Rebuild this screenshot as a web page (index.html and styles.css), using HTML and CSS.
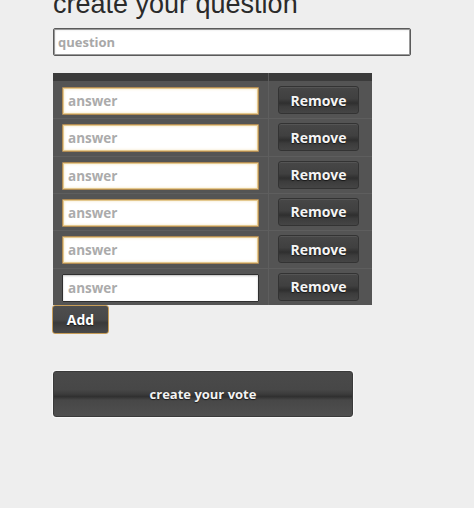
FILE: index.html
```html
<!DOCTYPE html>
<html>
<head>
<meta charset="utf-8">
<link rel="stylesheet" href="styles.css">
</head>
<body>
<main class="page">
  <h1 class="title">create your question</h1>
  <input class="question" type="text" placeholder="question">
  <div class="answers">
    <div class="answers-head"><span class="head-cell"></span><span class="head-cell last"></span></div>
    <div class="answer-row"><div class="cell-input"><input class="answer" type="text" placeholder="answer"></div><div class="cell-action"><button class="remove">Remove</button></div></div>
    <div class="answer-row"><div class="cell-input"><input class="answer" type="text" placeholder="answer"></div><div class="cell-action"><button class="remove">Remove</button></div></div>
    <div class="answer-row"><div class="cell-input"><input class="answer" type="text" placeholder="answer"></div><div class="cell-action"><button class="remove">Remove</button></div></div>
    <div class="answer-row"><div class="cell-input"><input class="answer" type="text" placeholder="answer"></div><div class="cell-action"><button class="remove">Remove</button></div></div>
    <div class="answer-row"><div class="cell-input"><input class="answer" type="text" placeholder="answer"></div><div class="cell-action"><button class="remove">Remove</button></div></div>
    <div class="answer-row"><div class="cell-input"><input class="answer plain" type="text" placeholder="answer"></div><div class="cell-action"><button class="remove">Remove</button></div></div>
  </div>
  <button class="add">Add</button>
  <button class="create">create your vote</button>
</main>
</body>
</html>
```

FILE: styles.css
```css
html, body {
  margin: 0;
  padding: 0;
  background: #eeeeee;
}

body {
  font-family: "Open Sans", "Liberation Sans", sans-serif;
  height: 508px;
  overflow: hidden;
}

.page {
  display: flex;
  flex-direction: column;
  align-items: flex-start;
  padding-left: 53px;
}

.title {
  margin: -9px 0 0 0;
  font-family: "Liberation Sans", Arial, sans-serif;
  font-weight: normal;
  font-size: 27px;
  line-height: 27px;
  color: #2a2a2a;
}

.question {
  box-sizing: border-box;
  margin: 10px 0 0 0;
  width: 358px;
  height: 28px;
  padding: 0 4px;
  border: 1px solid #5a5a5a;
  border-radius: 2px;
  box-shadow: inset 0 0 0 1px #9a9a9a, inset 1px 1px 2px rgba(0,0,0,0.15);
  background: #ffffff;
  font-family: "Open Sans", sans-serif;
  font-weight: 700;
  font-size: 13px;
  outline: none;
}

.question::placeholder {
  color: #a8a8a8;
}

.answers {
  margin-top: 17px;
  width: 319px;
  background: #545454;
  display: flex;
  flex-direction: column;
}

.answers-head {
  display: flex;
  height: 8px;
  background: #3b3b3b;
}

.head-cell {
  width: 216px;
  border-right: 1px solid #5a5a5a;
  box-sizing: border-box;
}

.head-cell.last {
  width: 103px;
  border-right: none;
}

.answer-row {
  display: flex;
  height: 37.33px;
  box-sizing: border-box;
  border-top: 1px solid #5e5e5e;
}

.answers-head + .answer-row {
  border-top: none;
}

.cell-input {
  box-sizing: border-box;
  width: 216px;
  padding: 5px 0 0 9px;
  border-right: 1px solid #5e5e5e;
}

.cell-action {
  box-sizing: border-box;
  width: 103px;
  padding: 4px 0 0 9px;
}

.answers-head + .answer-row .cell-input {
  padding-top: 6px;
}

.answers-head + .answer-row .cell-action {
  padding-top: 5px;
}

.answer {
  box-sizing: border-box;
  display: block;
  width: 197px;
  height: 28px;
  padding: 0 5px;
  margin: 0;
  border: 1px solid #b08a52;
  border-radius: 1px;
  box-shadow: inset 0 0 0 1px #e4c98f, inset 0 0 3px 1px #f3e6c6;
  background: #ffffff;
  font-family: "Open Sans", sans-serif;
  font-weight: 700;
  font-size: 13.5px;
  outline: none;
}

.answer.plain {
  border-color: #2f2f2f;
  box-shadow: inset 0 1px 2px rgba(0,0,0,0.25);
}

.answer::placeholder {
  color: #ababab;
}

.remove {
  box-sizing: border-box;
  width: 81px;
  height: 28px;
  margin: 0;
  padding: 0;
  border: 1px solid #333333;
  border-radius: 3px;
  background: linear-gradient(#474747 0%, #404040 45%, #2f2f2f 62%, #3c3c3c 75%, #454545 100%);
  box-shadow: inset 0 1px 0 rgba(255,255,255,0.08);
  color: #f4f4f4;
  font-family: "Open Sans", sans-serif;
  font-weight: 700;
  font-size: 14px;
  text-shadow: 0 1px 1px rgba(0,0,0,0.6);
  cursor: pointer;
}

.add {
  box-sizing: border-box;
  width: 57px;
  height: 29px;
  margin: 0 0 0 -1px;
  padding: 0;
  border: 1px solid #c79d58;
  border-radius: 3px;
  background: linear-gradient(#4e4e4e 0%, #484848 50%, #3a3a3a 62%, #494949 100%);
  color: #ffffff;
  font-family: "Open Sans", sans-serif;
  font-weight: 700;
  font-size: 14px;
  text-shadow: 0 1px 1px rgba(0,0,0,0.6);
}

.create {
  box-sizing: border-box;
  width: 300px;
  height: 46px;
  margin: 37px 0 0 0;
  padding: 0;
  border: 1px solid #3a3a3a;
  border-radius: 3px;
  background: linear-gradient(#4a4a4a 0%, #474747 40%, #3c3c3c 50%, #303030 56%, #474747 64%, #4f4f4f 100%);
  box-shadow: 0 0 0 1px rgba(255,255,255,0.6);
  color: #f2f2f2;
  font-family: "Open Sans", sans-serif;
  font-weight: 700;
  font-size: 13px;
  text-shadow: 0 1px 1px rgba(0,0,0,0.6);
}
```
